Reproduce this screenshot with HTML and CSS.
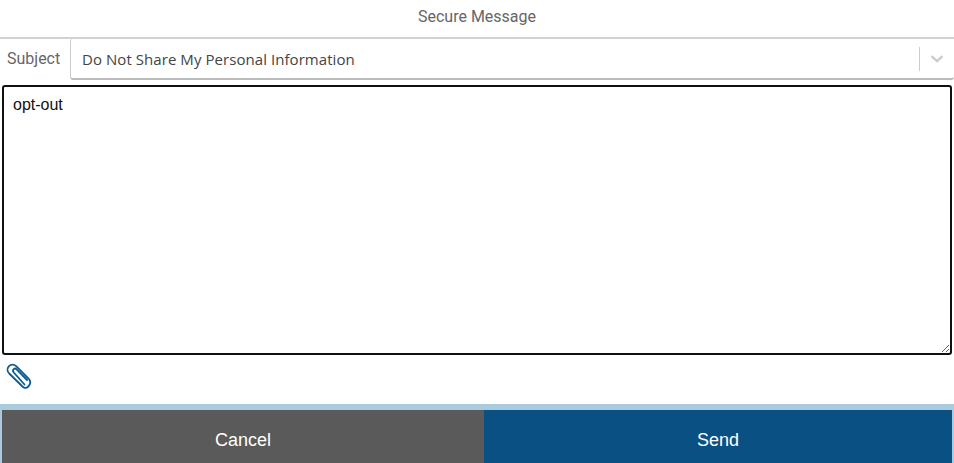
FILE: index.html
```html
<!DOCTYPE html>
<html lang="en">
<head>
    <meta charset="UTF-8">
    <meta name="viewport" content="width=device-width, initial-scale=1.0">
    <title>Secure Message</title>
    <link rel="stylesheet" href="styles.css">
</head>
<body>
    <div class="container">
        <h1 class="title">Secure Message</h1>

        <div class="subject-row">
            <label class="subject-label" for="subject">Subject</label>
            <div class="subject-select" id="subject">
                <span class="subject-value">Do Not Share My Personal Information</span>
                <span class="select-arrow">
                    <svg width="14" height="8" viewBox="0 0 14 8"><path d="M1.5 1.2 L7 6.2 L12.5 1.2" fill="none" stroke="#ccc" stroke-width="2.4"/></svg>
                </span>
            </div>
        </div>

        <div class="message-wrap">
            <textarea class="message" spellcheck="false">opt-out</textarea>
        </div>

        <div class="attach-row">
            <svg class="attach-icon" width="26" height="27" viewBox="0 0 26 27">
                <path d="M18.5 21.5 L7.8 9.5 C6.8 8.3 6.8 7 7.7 6.1 C8.6 5.3 9.7 5.5 10.6 6.4 L21 17 M17 24 L3.2 10.5 C1 8.2 1 5.2 3 3.2 C5 1.2 8 1.2 10.2 3.2 L22.6 15.6 C24.6 17.7 24.6 20.4 23 22.6 C21.4 24.9 19 25.6 17 24" fill="none" stroke="#0b5c94" stroke-width="1.8" stroke-linecap="round"/>
            </svg>
        </div>

        <div class="actions">
            <button class="btn btn-cancel">Cancel</button>
            <button class="btn btn-send">Send</button>
        </div>
    </div>
</body>
</html>
```

FILE: styles.css
```css
* {
    box-sizing: border-box;
}

html, body {
    height: 100%;
}

body {
    margin: 0;
    background-color: white;
    font-family: 'Liberation Sans', Arial, sans-serif;
    overflow: hidden;
}

.container {
    display: flex;
    flex-direction: column;
    height: 463px;
}

.title {
    height: 37px;
    margin: 0;
    padding-top: 7px;
    text-align: center;
    font-family: 'Roboto', sans-serif;
    font-size: 16px;
    font-weight: 400;
    line-height: 20px;
    color: #666;
}

.subject-row {
    display: flex;
    height: 43px;
    border-top: 2px solid #d2d2d2;
}

.subject-label {
    width: 70px;
    padding: 10px 0 0 7px;
    font-family: 'Roboto', sans-serif;
    font-size: 16px;
    font-weight: 400;
    line-height: 20px;
    color: #666;
}

.subject-select {
    flex: 1;
    display: flex;
    align-items: center;
    height: 41px;
    border-left: 1px solid #ccc;
    border-bottom: 2px solid #bbb;
    border-radius: 3px;
}

.subject-value {
    flex: 1;
    padding-left: 11px;
    font-family: 'Open Sans', sans-serif;
    font-size: 15px;
    letter-spacing: 0.06px;
    color: #444;
}

.select-arrow {
    display: flex;
    align-items: center;
    justify-content: center;
    width: 35px;
    height: 24px;
    border-left: 1px solid #ccc;
}

.message-wrap {
    padding: 5px 2px 0;
}

.message {
    display: block;
    width: 100%;
    height: 270px;
    padding: 8px 9px;
    border: 2px solid #111;
    border-radius: 3px;
    outline: none;
    font-family: 'Liberation Sans', Arial, sans-serif;
    font-size: 16px;
    line-height: 20px;
    color: #111;
}

.attach-row {
    height: 49px;
    padding: 8px 0 0 6px;
}

.attach-icon {
    display: block;
}

.actions {
    display: flex;
    flex: 1;
    padding: 6px 2px 0;
    background-color: #a9cbdd;
}

.btn {
    padding: 8px 0 0;
    border: none;
    color: white;
    font-family: 'Liberation Sans', Arial, sans-serif;
    font-size: 18px;
    cursor: pointer;
}

.btn-cancel {
    width: 482px;
    background-color: #5a5a5a;
}

.btn-send {
    flex: 1;
    background-color: #0b5083;
}
```
